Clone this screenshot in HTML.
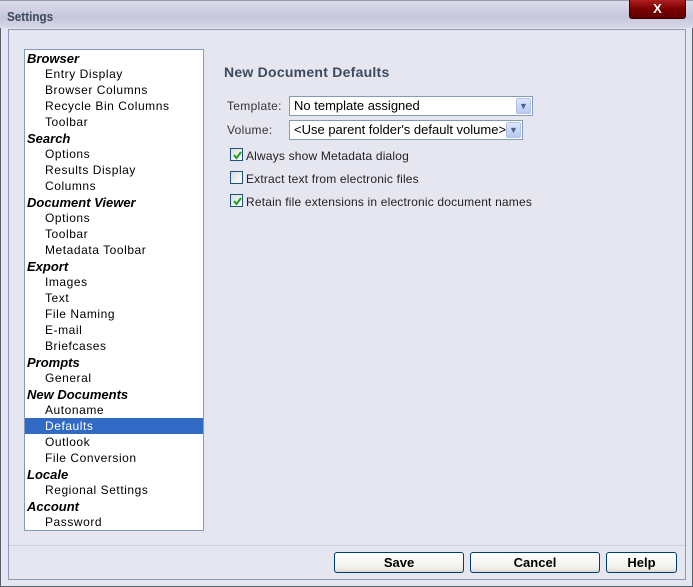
<!DOCTYPE html>
<html><head><meta charset="utf-8"><style>
*{margin:0;padding:0;box-sizing:border-box}
body{width:693px;height:587px;overflow:hidden;background:#e6e6f0;font-family:"Liberation Sans",sans-serif;font-size:12px;color:#000;position:relative}
.win{position:absolute;left:0;top:0;width:693px;height:587px;border:1px solid #5a6070;border-top:none;background:#e6e6f0}
.title{position:absolute;left:0;top:0;width:693px;height:28px;background:linear-gradient(#dcdce8,#c6c6dc 60%,#d8d8e6);border-top:1px solid #9a9ab0}
.title span{position:absolute;left:7px;top:8px;font-weight:bold;font-size:13px;color:#3c4a5e;transform:scaleX(.9);transform-origin:left}
.close{position:absolute;left:629px;top:0;width:57px;height:19px;background:linear-gradient(#b02020,#7a0000 50%,#600000);border:1px solid #3a0000;border-top:none;border-radius:0 0 3px 3px;color:#fff;font-weight:bold;text-align:center;font-size:13px;line-height:18px}
.panel{position:absolute;left:8px;top:29px;width:678px;height:551px;border:1px solid #8a9ab8}
.sep{position:absolute;left:9px;top:545px;width:676px;height:1px;background:#cfcfdb}
.list{position:absolute;left:24px;top:49px;width:180px;height:482px;background:#fff;border:1px solid #7f9db9}
.list div{position:absolute;left:0;width:178px;height:16px;line-height:17px;white-space:nowrap;font-size:12px;letter-spacing:.55px}
.list .h{font-weight:bold;font-style:italic;padding-left:2px;font-size:13px;letter-spacing:0}
.i{padding-left:20px}
.sel{background:#316ac5;color:#fff}
h1{position:absolute;left:224px;top:64px;font-size:14px;font-weight:bold;color:#3c4a5e;letter-spacing:.25px}
.lbl{position:absolute;left:227px;color:#333;letter-spacing:.3px}
.combo{position:absolute;height:20px;background:#fff;border:1px solid #7f9db9;padding-left:4px;line-height:18px;font-size:13px}
.arr{position:absolute;right:1px;top:1px;width:15px;height:16px;background:linear-gradient(#dce6fb,#b8c8f0);border:1px solid #b0c0e8;border-radius:2px;color:#4d6185;font-size:9px;text-align:center;line-height:14px}
.cb{position:absolute;left:230px;width:13px;height:13px;border:1px solid #1c5180;background:linear-gradient(135deg,#dcdcd6,#fff)}
.cb svg{position:absolute;left:1px;top:1px}
.ct{position:absolute;left:246px;color:#222;letter-spacing:.18px}
.btn{position:absolute;top:552px;height:21px;border:1px solid #003c74;border-radius:3px;background:linear-gradient(#fff,#f0f0ea 80%,#d8d8d0);font-weight:bold;text-align:center;line-height:19px;font-size:13px}
</style></head><body>
<div class="win"></div>
<div class="title"><span>Settings</span></div>
<div class="close">X</div>
<div class="panel"></div>
<div class="sep"></div>
<div class="list">
<div class="h" style="top:0">Browser</div>
<div class="i" style="top:16px">Entry Display</div>
<div class="i" style="top:32px">Browser Columns</div>
<div class="i" style="top:48px">Recycle Bin Columns</div>
<div class="i" style="top:64px">Toolbar</div>
<div class="h" style="top:80px">Search</div>
<div class="i" style="top:96px">Options</div>
<div class="i" style="top:112px">Results Display</div>
<div class="i" style="top:128px">Columns</div>
<div class="h" style="top:144px">Document Viewer</div>
<div class="i" style="top:160px">Options</div>
<div class="i" style="top:176px">Toolbar</div>
<div class="i" style="top:192px">Metadata Toolbar</div>
<div class="h" style="top:208px">Export</div>
<div class="i" style="top:224px">Images</div>
<div class="i" style="top:240px">Text</div>
<div class="i" style="top:256px">File Naming</div>
<div class="i" style="top:272px">E-mail</div>
<div class="i" style="top:288px">Briefcases</div>
<div class="h" style="top:304px">Prompts</div>
<div class="i" style="top:320px">General</div>
<div class="h" style="top:336px">New Documents</div>
<div class="i" style="top:352px">Autoname</div>
<div class="i sel" style="top:368px">Defaults</div>
<div class="i" style="top:384px">Outlook</div>
<div class="i" style="top:400px">File Conversion</div>
<div class="h" style="top:416px">Locale</div>
<div class="i" style="top:432px">Regional Settings</div>
<div class="h" style="top:448px">Account</div>
<div class="i" style="top:464px">Password</div>
</div>
<h1>New Document Defaults</h1>
<div class="lbl" style="top:99px">Template:</div>
<div class="combo" style="left:289px;top:96px;width:244px">No template assigned<div class="arr">&#9660;</div></div>
<div class="lbl" style="top:123px">Volume:</div>
<div class="combo" style="left:289px;top:120px;width:234px">&lt;Use parent folder's default volume&gt;<div class="arr">&#9660;</div></div>
<div class="cb" style="top:148px"><svg width="11" height="11"><path d="M2 5 L4.5 8 L9 2" stroke="#21a121" stroke-width="2" fill="none"/></svg></div>
<div class="ct" style="top:149px">Always show Metadata dialog</div>
<div class="cb" style="top:171px"></div>
<div class="ct" style="top:172px">Extract text from electronic files</div>
<div class="cb" style="top:194px"><svg width="11" height="11"><path d="M2 5 L4.5 8 L9 2" stroke="#21a121" stroke-width="2" fill="none"/></svg></div>
<div class="ct" style="top:195px">Retain file extensions in electronic document names</div>
<div class="btn" style="left:334px;width:130px">Save</div>
<div class="btn" style="left:470px;width:130px">Cancel</div>
<div class="btn" style="left:606px;width:71px">Help</div>
</body></html>
